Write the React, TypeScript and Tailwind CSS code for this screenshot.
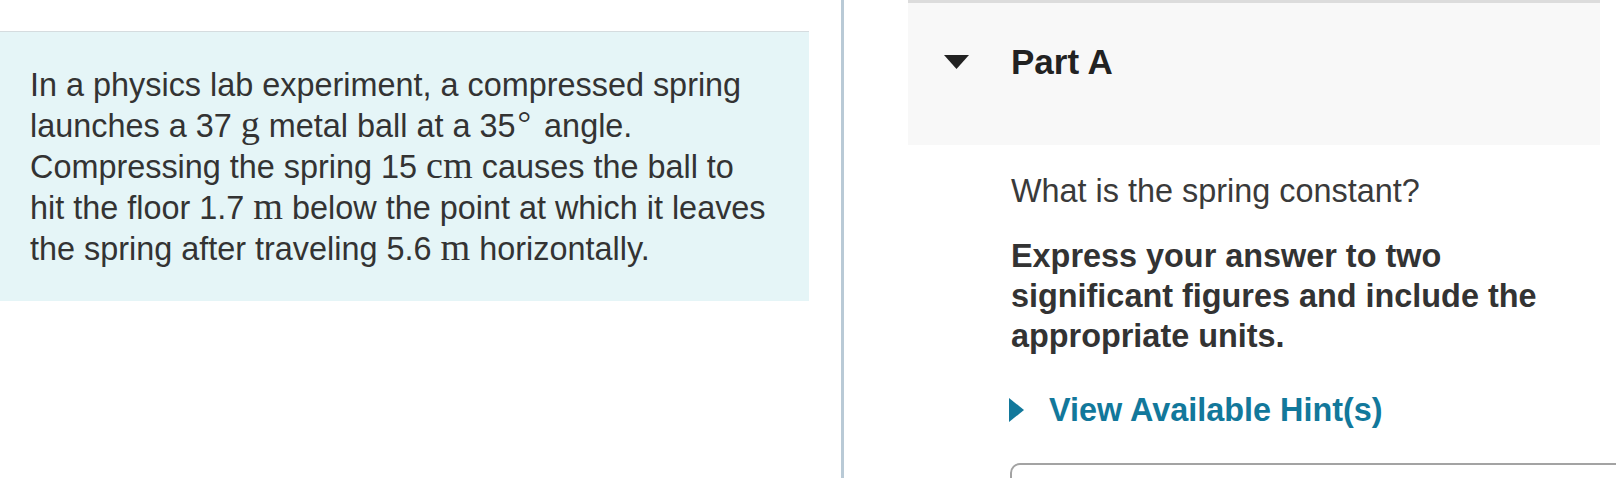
/**
 * Problem view - physics question with Part A on the right
 */

import React from 'react';

const sans = { fontFamily: '"Liberation Sans", Arial, sans-serif' };

function Unit({ children }: { children: React.ReactNode }) {
  return <span className="font-['Liberation_Serif',serif] text-[1.18em] leading-none">{children}</span>;
}

function ProblemIntro() {
  return (
    <div className="mt-[31px] w-[809px] border-t border-[#d5dcdf] bg-[#e5f5f7] pl-[30px] pr-[20px] pt-[33px] pb-[32px]">
      <p className="text-[32.4px] leading-[40px] text-[#333]">
        In a physics lab experiment, a compressed spring
        <br />
        launches a 37 <Unit>g</Unit> metal ball at a 35
        <span className="relative -top-[3px] ml-[2px] mr-[13px] font-['Liberation_Serif',serif] text-[34px] leading-none">°</span>
        angle.
        <br />
        Compressing the spring 15 <Unit>cm</Unit> causes the ball to
        <br />
        hit the floor 1.7 <Unit>m</Unit> below the point at which it leaves
        <br />
        the spring after traveling 5.6 <Unit>m</Unit> horizontally.
      </p>
    </div>
  );
}

function PartHeader({ label }: { label: string }) {
  return (
    <div className="flex h-[145px] items-start border-t-[3px] border-[#dcdcdc] bg-[#f8f8f8] pt-[39px]">
      <div className="flex h-[40px] w-[103px] items-center pl-[36px]">
        <svg width="25" height="14" viewBox="0 0 25 14">
          <polygon points="0,0 25,0 12.5,14" fill="#222" />
        </svg>
      </div>
      <h2 className="text-[35px] font-bold leading-[40px] text-[#222]">{label}</h2>
    </div>
  );
}

function HintToggle() {
  return (
    <button className="flex items-center gap-[25px] text-[32.4px] font-bold leading-[40px] text-[#12789b]">
      <svg width="15" height="24" viewBox="0 0 15 24">
        <polygon points="0,0 15,12 0,24" fill="#12789b" />
      </svg>
      View Available Hint(s)
    </button>
  );
}

export default function App() {
  return (
    <div className="flex h-[478px] w-[1616px] overflow-hidden bg-white" style={sans}>
      <div className="w-[841px] shrink-0">
        <ProblemIntro />
      </div>

      <div className="w-[3px] shrink-0 bg-[#b9cad6]" />

      <div className="flex-1 pl-[64px] pr-[16px]">
        <PartHeader label="Part A" />

        <div className="ml-[103px] w-[575px]">
          <p className="mt-[26px] text-[32.4px] leading-[40px] text-[#3a3a3a]">What is the spring constant?</p>
          <p className="mt-[25px] text-[32.4px] font-bold leading-[40px] text-[#333]">
            Express your answer to two significant figures and include the appropriate units.
          </p>
          <div className="mt-[34px] -ml-[2px]">
            <HintToggle />
          </div>
          <div className="mt-[33px] -ml-[1px] h-[60px] w-[700px] rounded-[10px] border-2 border-[#a3a3a3]" />
        </div>
      </div>
    </div>
  );
}
